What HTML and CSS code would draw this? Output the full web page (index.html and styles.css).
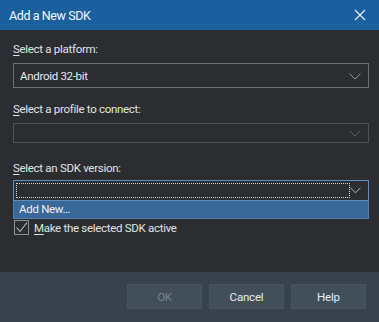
FILE: index.html
```html
<!DOCTYPE html>
<html>
<head>
<meta charset="utf-8">
<link rel="stylesheet" href="styles.css">
</head>
<body>
<div class="dialog">
  <div class="titlebar">
    <span class="title">Add a New SDK</span>
    <svg class="close" width="12" height="12" viewBox="0 0 12 12"><path d="M1 1 L11 11 M11 1 L1 11" stroke="#e8f0f8" stroke-width="1.1" fill="none"/></svg>
  </div>
  <div class="body">
    <div class="label"><u>S</u>elect a platform:</div>
    <div class="combo">
      <span class="value">Android 32-bit</span>
      <svg class="chev" width="12" height="7" viewBox="0 0 12 7"><path d="M0.5 0.5 L6 6 L11.5 0.5" stroke="#8e9499" stroke-width="1" fill="none"/></svg>
    </div>
    <div class="label l2"><u>S</u>elect a profile to connect:</div>
    <div class="combo disabled">
      <span class="value"></span>
      <svg class="chev" width="12" height="7" viewBox="0 0 12 7"><path d="M0.5 0.5 L6 6 L11.5 0.5" stroke="#5a6065" stroke-width="1" fill="none"/></svg>
    </div>
    <div class="label l3"><u>S</u>elect an SDK version:</div>
    <div class="combo-wrap">
      <div class="combo focused">
        <span class="focusrect"></span>
        <svg class="chev" width="12" height="7" viewBox="0 0 12 7"><path d="M0.5 0.5 L6 6 L11.5 0.5" stroke="#b8bdc2" stroke-width="1" fill="none"/></svg>
      </div>
      <div class="droplist"><div class="item">Add New…</div></div>
    </div>
    <div class="check">
      <span class="box"><svg width="13" height="13" viewBox="0 0 13 13"><path d="M1.5 6.5 L5 10.5 L12 1.5" stroke="#b8bdc2" stroke-width="1.1" fill="none"/></svg></span>
      <span><u>M</u>ake the selected SDK active</span>
    </div>
  </div>
  <div class="footer">
    <button class="btn off">OK</button>
    <button class="btn">Cancel</button>
    <button class="btn">Help</button>
  </div>
</div>
</body>
</html>
```
FILE: styles.css
```css
html, body {
  margin: 0;
  padding: 0;
}
body {
  font-family: Roboto, "Open Sans", sans-serif;
  font-size: 11.5px;
  letter-spacing: -0.3px;
  color: #e6e8ea;
  background: #2b2d31;
}
.dialog {
  width: 379px;
  height: 322px;
  display: flex;
  flex-direction: column;
}
.titlebar {
  height: 30px;
  background: #1c5f9f;
  display: flex;
  align-items: center;
  justify-content: space-between;
  padding: 0 13px 0 9px;
  box-sizing: border-box;
}
.title {
  font-size: 12.5px;
  letter-spacing: -0.4px;
  color: #f4f7fa;
}
.close {
  display: block;
}
.body {
  flex: 1;
  background: #2b2d31;
  padding: 11px 10px 0 13px;
}
.label {
  height: 16px;
  line-height: 16px;
  color: #e0e3e6;
}
.label u, .check u {
  text-decoration-thickness: 1px;
  text-underline-offset: 2px;
}
.l2 { margin-top: 13px; }
.l3 { margin-top: 17px; }
.combo {
  margin-top: 6px;
  height: 25px;
  box-sizing: border-box;
  border: 1px solid #6b7276;
  display: flex;
  align-items: center;
  justify-content: space-between;
  padding: 1px 7px 0 6px;
}
.combo .value {
  color: #e8eaec;
}
.combo.disabled {
  height: 20px;
  border-color: #4c5357;
}
.combo-wrap {
  margin-top: 4px;
}
.combo.focused {
  margin-top: 0;
  height: 21px;
  border-color: #5c8fc4;
  padding: 2px 7px 2px 2px;
}
.focusrect {
  flex: 0 0 334px;
  align-self: stretch;
  border: 1px dotted #d0d4d8;
  box-sizing: border-box;
}
.droplist {
  background: #3a6898;
  border: 1px solid #4f7fb0;
  border-top: none;
  height: 18px;
  box-sizing: border-box;
}
.item {
  line-height: 17px;
  padding-left: 5px;
  color: #eef2f6;
}
.check {
  margin-top: 1px;
  display: flex;
  align-items: center;
  gap: 5px;
  padding-left: 1px;
  color: #e0e3e6;
}
.box {
  width: 13px;
  height: 13px;
  border: 1px solid #8a9095;
  display: block;
}
.box svg {
  display: block;
}
.footer {
  height: 50px;
  background: #37424c;
  display: flex;
  justify-content: flex-end;
  gap: 7px;
  padding: 12px 13px 0 0;
  box-sizing: border-box;
}
.btn {
  width: 75px;
  height: 25px;
  border: 1px solid #465461;
  background: #424f5b;
  color: #e8ebee;
  font-family: Roboto, "Open Sans", sans-serif;
  font-size: 11.5px;
  letter-spacing: -0.2px;
  padding: 0;
}
.btn.off {
  color: #77818a;
}
```
